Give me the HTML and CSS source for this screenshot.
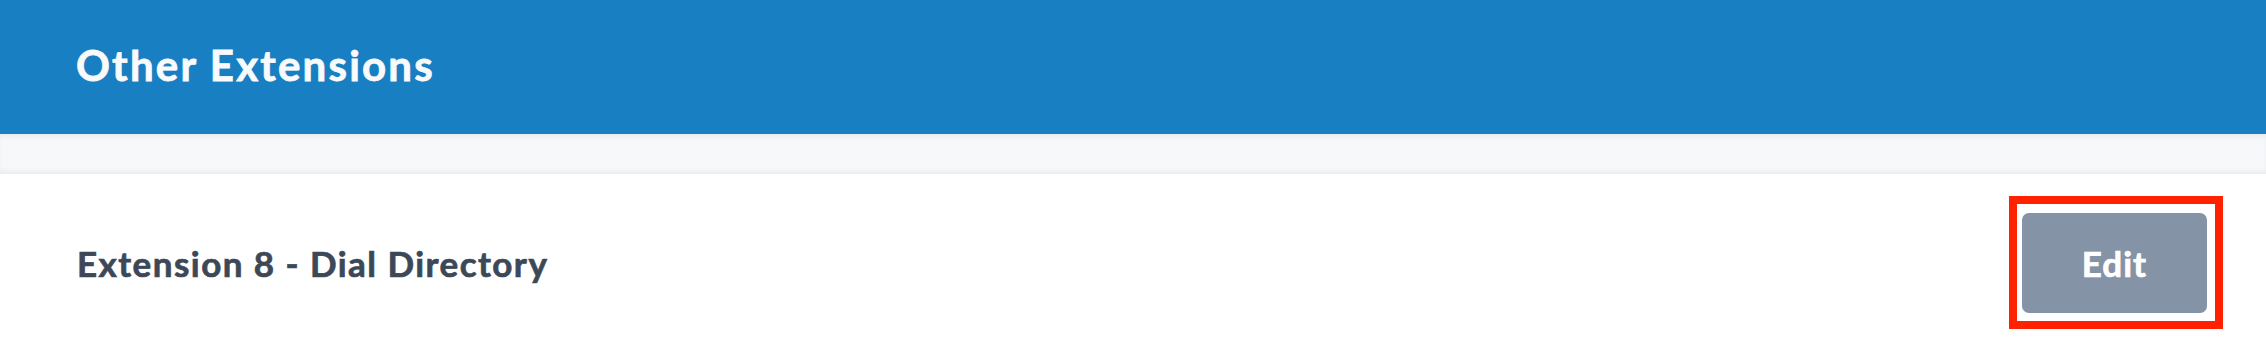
FILE: index.html
```html
<!DOCTYPE html>
<html lang="en">
<head>
    <meta charset="UTF-8">
    <meta name="viewport" content="width=device-width, initial-scale=1.0">
    <title>Other Extensions</title>
    <link rel="stylesheet" href="styles.css">
</head>
<body>

    <!-- header -->
    <header class="section-header">
        <h1>Other Extensions</h1>
    </header>

    <div class="divider"></div>

    <!-- extension list -->
    <main class="ext-list">
        <div class="ext-row">
            <h2 class="ext-name">Extension 8 - Dial Directory</h2>
            <span class="highlight">
                <button class="edit-button">Edit</button>
            </span>
        </div>
    </main>

</body>
</html>
```

FILE: styles.css
```css
body {
    font-family: Lato, "Open Sans", sans-serif;
    margin: 0;
    padding: 0;
    background: #ffffff;
}

.section-header {
    background-color: #187fc3;
    height: 134px;
    display: flex;
    align-items: center;
    padding-left: 76px;
    padding-bottom: 4px;
    box-sizing: border-box;
}

.section-header h1 {
    margin: 0;
    color: #f8fafc;
    font-size: 42px;
    font-weight: 700;
    letter-spacing: 2.2px;
    -webkit-text-stroke: 0.8px #f8fafc;
}

/* gray band between sections */
.divider {
    height: 40px;
    background: #f7f8fa;
    box-shadow: inset 0 6px 6px -4px #e6e8ec, inset 0 -6px 6px -4px #e6e8ec;
}

.ext-row {
    display: flex;
    align-items: center;
    justify-content: space-between;
    padding: 22px 43px 23px 77px;
}

.ext-name {
    margin: 0;
    color: #3c4858;
    font-size: 35px;
    font-weight: 700;
    letter-spacing: 1.45px;
    -webkit-text-stroke: 0.7px #3c4858;
}

/* red annotation box round the button */
.highlight {
    display: inline-flex;
    border: 8px solid #ff2200;
    padding: 9px 8px 8px 5px;
}

.edit-button {
    width: 185px;
    height: 100px;
    border: none;
    border-radius: 7px;
    background: #8593a6;
    color: #ffffff;
    font-family: inherit;
    font-size: 35px;
    font-weight: 700;
    letter-spacing: 1px;
    -webkit-text-stroke: 0.7px #ffffff;
}
```
